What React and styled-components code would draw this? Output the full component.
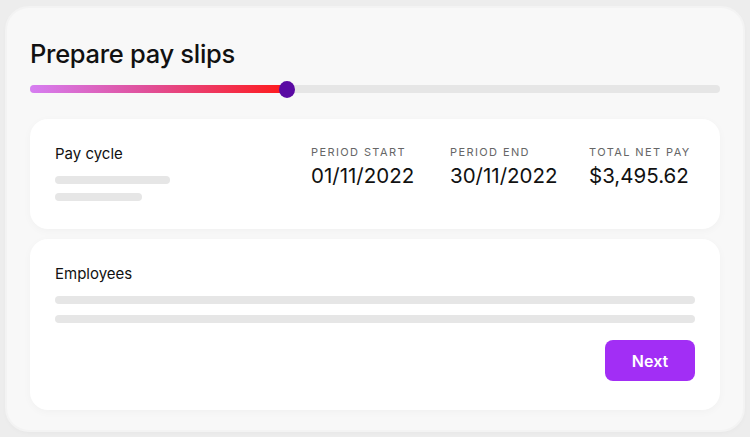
import React from 'react'
import { styled, createGlobalStyle } from 'styled-components'

const GlobalStyle = createGlobalStyle`
  html, body {
    margin: 0;
    padding: 0;
    background: #ededed;
    font-family: Inter, "Noto Sans", sans-serif;
    color: #111;
  }
  * { box-sizing: border-box; }
`

const Page = styled.div`
  width: 750px;
  height: 437px;
  padding: 8px 7px 7px 7px;
`

const Panel = styled.div`
  height: 100%;
  background: #f8f8f8;
  border-radius: 22px;
  box-shadow: 0 0 0 2px #f3f3f3, 0 2px 6px rgba(0, 0, 0, 0.04);
  padding: 30px 23px 20px 23px;
  display: flex;
  flex-direction: column;
`

const Title = styled.h1`
  margin: 0;
  font-size: 25.5px;
  font-weight: 500;
  line-height: 32px;
  letter-spacing: -0.3px;
`

const Track = styled.div`
  position: relative;
  height: 8px;
  margin: 15px 0 26px 0;
  background: #e6e6e6;
  border-radius: 4px;
`

const Fill = styled.div`
  height: 100%;
  border-radius: 4px;
  background: linear-gradient(90deg, #d67ef2 0%, #e0509a 45%, #ff1a1a 100%);
`

const Thumb = styled.div`
  position: absolute;
  top: 50%;
  width: 16px;
  height: 17px;
  margin-left: -8px;
  margin-top: -8.5px;
  border-radius: 50%;
  background: #5a0aa3;
`

const Card = styled.div`
  background: #fff;
  border-radius: 18px;
  box-shadow: 0 2px 8px rgba(0, 0, 0, 0.03);
  padding: ${p => p.$pad};
`

const CycleCard = styled(Card)`
  display: flex;
  height: 110px;
  margin-bottom: 10px;
`

const CycleInfo = styled.div`
  flex: 1;
`

const CardLabel = styled.div`
  font-size: 15px;
  line-height: 20px;
  color: #111;
`

const Skeleton = styled.div`
  height: 8px;
  width: ${p => p.$w};
  background: #e6e6e6;
  border-radius: 4px;
  margin-top: ${p => p.$mt}px;
`

const Stats = styled.div`
  display: flex;
`

const Stat = styled.div`
  width: ${p => p.$w}px;
`

const StatLabel = styled.div`
  font-size: 11px;
  letter-spacing: 1.4px;
  color: #666;
  line-height: 14px;
  margin-top: 1px;
`

const StatValue = styled.div`
  font-size: 20.5px;
  line-height: 26px;
  margin-top: 4px;
  color: #111;
`

const EmployeesCard = styled(Card)`
  flex: 1;
  display: flex;
  flex-direction: column;
`

const Footer = styled.div`
  display: flex;
  justify-content: flex-end;
  margin-top: 17px;
`

const Button = styled.button`
  width: 90px;
  height: 41px;
  border: none;
  border-radius: 8px;
  background: #a22ef5;
  color: #fff;
  font-family: Inter, "Noto Sans", sans-serif;
  font-size: 16px;
  font-weight: 600;
  cursor: pointer;
`

const stats = [
  { label: 'PERIOD START', value: '01/11/2022', w: 139 },
  { label: 'PERIOD END', value: '30/11/2022', w: 139 },
  { label: 'TOTAL NET PAY', value: '$3,495.62', w: 106 },
]

const App = () => {
  const progress = 37.2
  return (
    <Page>
      <GlobalStyle />
      <Panel>
        <Title>Prepare pay slips</Title>
        <Track>
          <Fill style={{ width: `${progress}%` }} />
          <Thumb style={{ left: `${progress}%` }} />
        </Track>

        <CycleCard $pad="25px 25px 0 25px">
          <CycleInfo>
            <CardLabel>Pay cycle</CardLabel>
            <Skeleton $w="115px" $mt={12} />
            <Skeleton $w="87px" $mt={9} />
          </CycleInfo>
          <Stats>
            {stats.map(s => (
              <Stat key={s.label} $w={s.w}>
                <StatLabel>{s.label}</StatLabel>
                <StatValue>{s.value}</StatValue>
              </Stat>
            ))}
          </Stats>
        </CycleCard>

        <EmployeesCard $pad="25px 25px 0 25px">
          <CardLabel>Employees</CardLabel>
          <Skeleton $w="100%" $mt={12} />
          <Skeleton $w="100%" $mt={11} />
          <Footer>
            <Button>Next</Button>
          </Footer>
        </EmployeesCard>
      </Panel>
    </Page>
  )
}

export default App
